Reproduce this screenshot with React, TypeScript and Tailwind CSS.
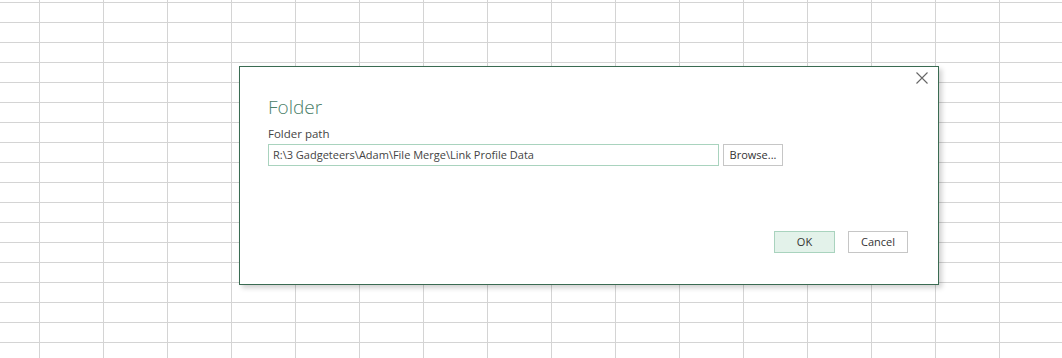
import React from "react";

const FONT = { fontFamily: '"Segoe UI", "Open Sans", "Noto Sans", sans-serif' };

function CloseIcon() {
  return (
    <svg width="12" height="12" viewBox="0 0 12 12" className="block">
      <path d="M0.5 0.5 L11.5 11.5 M11.5 0.5 L0.5 11.5" stroke="#666" strokeWidth="1.1" fill="none" />
    </svg>
  );
}

export default function App() {
  return (
    <div
      className="relative h-[358px] w-[1062px] overflow-hidden bg-white bg-[linear-gradient(to_right,#d4d4d4_1px,transparent_1px),linear-gradient(to_bottom,#d4d4d4_1px,transparent_1px)] bg-[size:64px_20px] bg-[position:39px_2px]"
      style={FONT}
    >
      {/* Folder dialog */}
      <div className="absolute left-[239px] top-[66px] flex h-[219px] w-[700px] flex-col border border-[#3a6b52] bg-white shadow-[3px_3px_5px_rgba(0,0,0,0.18)]">
        <div className="flex justify-end pr-[10px] pt-[5px]">
          <button className="flex h-[12px] w-[12px] items-center justify-center">
            <CloseIcon />
          </button>
        </div>

        <div className="flex flex-col pl-[28px] pr-[30px]">
          <h1 className="mt-[10px] text-[19px] font-light leading-[26px] text-[#4a8068]">Folder</h1>
          <label className="mt-[6px] text-[11.5px] leading-[16px] text-[#444]">Folder path</label>
          <div className="mt-[2px] flex items-center gap-[4px]">
            <div className="flex h-[22px] w-[451px] items-center border border-[#a9d3be] px-[4px] text-[11px] text-[#444]">
              R:\3 Gadgeteers\Adam\File Merge\Link Profile Data
            </div>
            <button className="flex h-[22px] w-[60px] items-center justify-center border border-[#c6c6c6] bg-white text-[11px] text-[#333]">
              Browse...
            </button>
          </div>
        </div>

        <div className="mt-auto mb-[31px] flex justify-end gap-[13px] pr-[30px]">
          <button className="flex h-[22px] w-[61px] items-center justify-center border border-[#a9d3be] bg-[#e3f2ea] text-[11px] text-[#333]">
            OK
          </button>
          <button className="flex h-[22px] w-[60px] items-center justify-center border border-[#c6c6c6] bg-white text-[11px] text-[#333]">
            Cancel
          </button>
        </div>
      </div>
    </div>
  );
}
